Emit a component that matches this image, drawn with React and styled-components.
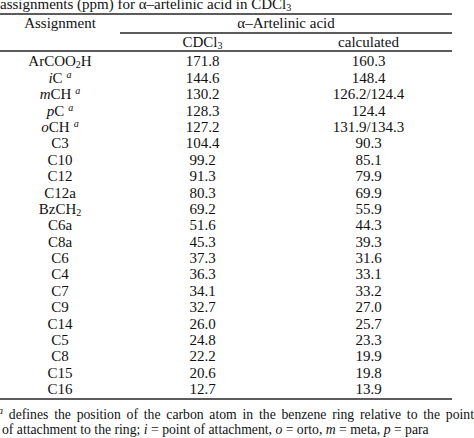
import React from 'react';
import styled, { createGlobalStyle } from 'styled-components';

const GlobalStyle = createGlobalStyle`
    html, body {
        margin: 0;
        padding: 0;
        background: #fff;
    }
    body {
        width: 474px;
        height: 438px;
        overflow: hidden;
        font-family: "Liberation Serif", "Times New Roman", serif;
        color: #111;
    }
`;

const Page = styled.div`
    width: 474px;
    height: 438px;
    overflow: hidden;
    font-size: 15px;
`;

const Caption = styled.div`
    height: 13px;
    line-height: 13px;
    margin-top: -2px;
    margin-bottom: 2px;
    white-space: nowrap;
`;

const Rule = styled.div`
    width: 452px;
    height: 2px;
    background: #5c5c5c;
`;

const SubRule = styled.div`
    height: 2px;
    background: #5c5c5c;
`;

const Head = styled.div`
    display: flex;
    width: 452px;
`;

const HeadLabel = styled.div`
    width: 120px;
    text-align: center;
    line-height: 17px;
`;

const HeadGroup = styled.div`
    flex: 1;
    display: flex;
    flex-direction: column;
`;

const GroupTitle = styled.div`
    text-align: center;
    line-height: 17px;
`;

const SubHead = styled.div`
    display: grid;
    grid-template-columns: 165px 167px;
    line-height: 15px;
`;

const Body = styled.div`
    display: grid;
    grid-template-columns: 120px 165px 167px;
    grid-auto-rows: 16.4px;
    width: 452px;
    padding: 1px 0 0;
`;

const Cell = styled.div`
    text-align: center;
    line-height: 16.4px;
    white-space: nowrap;
`;

const Sub = styled.sub`
    font-size: 10px;
    vertical-align: -2px;
    line-height: 0;
`;

const Sup = styled.sup`
    font-size: 10px;
    font-style: italic;
    vertical-align: 5px;
    line-height: 0;
    margin-left: ${(p) => (p.$tight ? '0' : '4px')};
`;

const Footnote = styled.div`
    margin: 7px 0 0 -2px;
    font-size: 13.7px;
    line-height: 15px;
`;

const NoteLine = styled.div`
    width: ${(p) => (p.$justify ? '476px' : 'auto')};
    padding-left: ${(p) => p.$indent || 0}px;
    text-align: ${(p) => (p.$justify ? 'justify' : 'left')};
    text-align-last: ${(p) => (p.$justify ? 'justify' : 'auto')};
    white-space: ${(p) => (p.$justify ? 'normal' : 'nowrap')};
`;

const rows = [
    [<>ArCOO<Sub>2</Sub>H</>, '171.8', '160.3'],
    [<><i>i</i>C<Sup>a</Sup></>, '144.6', '148.4'],
    [<><i>m</i>CH<Sup>a</Sup></>, '130.2', '126.2/124.4'],
    [<><i>p</i>C<Sup>a</Sup></>, '128.3', '124.4'],
    [<><i>o</i>CH<Sup>a</Sup></>, '127.2', '131.9/134.3'],
    ['C3', '104.4', '90.3'],
    ['C10', '99.2', '85.1'],
    ['C12', '91.3', '79.9'],
    ['C12a', '80.3', '69.9'],
    [<>BzCH<Sub>2</Sub></>, '69.2', '55.9'],
    ['C6a', '51.6', '44.3'],
    ['C8a', '45.3', '39.3'],
    ['C6', '37.3', '31.6'],
    ['C4', '36.3', '33.1'],
    ['C7', '34.1', '33.2'],
    ['C9', '32.7', '27.0'],
    ['C14', '26.0', '25.7'],
    ['C5', '24.8', '23.3'],
    ['C8', '22.2', '19.9'],
    ['C15', '20.6', '19.8'],
    ['C16', '12.7', '13.9'],
];

const App = () => (
    <Page>
        <GlobalStyle />
        <Caption>
            assignments (ppm) for α–artelinic acid in CDCl<Sub>3</Sub>
        </Caption>
        <Rule />
        <Head>
            <HeadLabel>Assignment</HeadLabel>
            <HeadGroup>
                <GroupTitle>α–Artelinic acid</GroupTitle>
                <SubRule />
                <SubHead>
                    <Cell>CDCl<Sub>3</Sub></Cell>
                    <Cell>calculated</Cell>
                </SubHead>
            </HeadGroup>
        </Head>
        <Rule />
        <Body>
            {rows.map(([name, exp, calc], i) => (
                <React.Fragment key={i}>
                    <Cell>{name}</Cell>
                    <Cell>{exp}</Cell>
                    <Cell>{calc}</Cell>
                </React.Fragment>
            ))}
        </Body>
        <Rule />
        <Footnote>
            <NoteLine $justify>
                <Sup $tight>a</Sup> defines the position of the carbon atom in the benzene ring relative to the point
            </NoteLine>
            <NoteLine $indent={4}>
                of attachment to the ring; <i>i</i> = point of attachment, <i>o</i> = orto, <i>m</i> = meta, <i>p</i> = para
            </NoteLine>
        </Footnote>
    </Page>
);

export default App;
